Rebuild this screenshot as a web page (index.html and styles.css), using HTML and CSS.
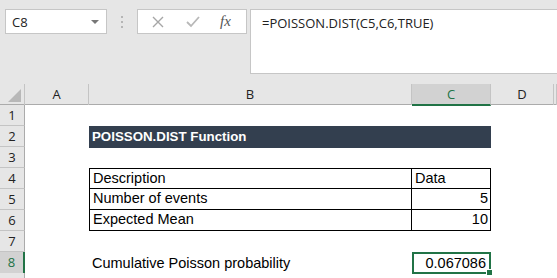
FILE: index.html
```html
<!DOCTYPE html>
<html lang="en">
<head>
  <meta charset="UTF-8">
  <title>POISSON.DIST Function</title>
  <link rel="stylesheet" href="styles.css">
</head>
<body>
  <div class="toolbar">
    <div class="name-box">
      <span>C8</span>
      <span class="drop"></span>
    </div>
    <div class="dots"><i></i><i></i><i></i></div>
    <div class="fx-box">
      <svg class="icon" width="12" height="12" viewBox="0 0 12 12">
        <path d="M1 1 L11 11 M11 1 L1 11" stroke="#a6a6a6" stroke-width="1.4" fill="none"/>
      </svg>
      <svg class="icon" width="14" height="12" viewBox="0 0 14 12">
        <path d="M1 6 L5 10 L13 1" stroke="#b8b8b8" stroke-width="1.8" fill="none"/>
      </svg>
      <span class="fx">fx</span>
    </div>
    <div class="formula">=POISSON.DIST(C5,C6,TRUE)</div>
  </div>

  <div class="sheet">
    <div class="row head">
      <div class="corner"><span class="tri"></span></div>
      <div class="col">A</div>
      <div class="col">B</div>
      <div class="col active">C</div>
      <div class="col">D</div>
      <div class="col"></div>
    </div>
    <div class="row">
      <div class="num">1</div><div></div><div></div><div></div><div></div>
    </div>
    <div class="row">
      <div class="num">2</div><div></div>
      <div class="title">POISSON.DIST Function</div>
      <div class="title"></div><div></div>
    </div>
    <div class="row">
      <div class="num">3</div><div></div><div></div><div></div><div></div>
    </div>
    <div class="row first">
      <div class="num">4</div><div></div>
      <div class="cell left">Description</div>
      <div class="cell">Data</div><div></div>
    </div>
    <div class="row">
      <div class="num">5</div><div></div>
      <div class="cell left">Number of events</div>
      <div class="cell right">5</div><div></div>
    </div>
    <div class="row">
      <div class="num">6</div><div></div>
      <div class="cell left">Expected Mean</div>
      <div class="cell right">10</div><div></div>
    </div>
    <div class="row">
      <div class="num">7</div><div></div><div></div><div></div><div></div>
    </div>
    <div class="row">
      <div class="num active">8</div><div></div>
      <div class="text">Cumulative Poisson probability</div>
      <div class="selected">0.067086<span class="handle"></span></div><div></div>
    </div>
    <div class="row last">
      <div class="num"></div><div></div><div></div><div></div><div></div>
    </div>
  </div>
</body>
</html>
```

FILE: styles.css
```css
body {
  margin: 0;
  width: 557px;
  height: 278px;
  overflow: hidden;
  background: #ffffff;
  font-family: "Open Sans", "Noto Sans", sans-serif;
}

.toolbar {
  height: 84px;
  background: #e6e6e6;
  display: flex;
  align-items: flex-start;
  padding: 9px 0 0 5px;
  box-sizing: border-box;
}

.name-box {
  width: 102px;
  height: 25px;
  box-sizing: border-box;
  background: #fff;
  border: 1px solid #c6c6c6;
  display: flex;
  align-items: center;
  justify-content: space-between;
  padding: 0 7px 0 6px;
  font-size: 13px;
  color: #222;
}

.drop {
  width: 0;
  height: 0;
  border-left: 4px solid transparent;
  border-right: 4px solid transparent;
  border-top: 4px solid #777;
}

.dots {
  width: 30px;
  height: 25px;
  display: flex;
  flex-direction: column;
  align-items: center;
  justify-content: center;
  gap: 3px;
}

.dots i {
  width: 2px;
  height: 2px;
  background: #b5b5b5;
}

.fx-box {
  width: 110px;
  height: 25px;
  box-sizing: border-box;
  background: #fff;
  border: 1px solid #c6c6c6;
  display: flex;
  align-items: center;
  padding: 0 0 0 14px;
  gap: 22px;
}

.fx {
  font-family: "Liberation Serif", serif;
  font-style: italic;
  font-size: 15px;
  color: #555;
  margin-left: -2px;
}

.formula {
  margin-left: 3px;
  flex: 1;
  height: 65px;
  box-sizing: border-box;
  background: #fff;
  border: 1px solid #c6c6c6;
  border-right: none;
  padding: 4px 0 0 11px;
  font-size: 13px;
  color: #222;
}

.row {
  display: grid;
  grid-template-columns: 25px 64px 323px 79px 63px 3px;
  height: 21px;
}

.row.head {
  height: 20px;
  background: #e6e6e6;
  border-bottom: 1px solid #ababab;
}

.row.last {
  height: 6px;
}

.corner {
  position: relative;
  border-right: 1px solid #c4c4c4;
}

.tri {
  position: absolute;
  right: 3px;
  bottom: 3px;
  width: 0;
  height: 0;
  border-left: 13px solid transparent;
  border-bottom: 13px solid #b8b8b8;
}

.col {
  border-right: 1px solid #c4c4c4;
  text-align: center;
  font-size: 13px;
  line-height: 20px;
  color: #222;
}

.col.active {
  background: #d2d2d2;
  color: #217346;
  border-bottom: 2px solid #217346;
  margin-bottom: -1px;
}

.num {
  background: #e6e6e6;
  border-right: 1px solid #ababab;
  border-bottom: 1px solid #c4c4c4;
  text-align: center;
  font-size: 13px;
  line-height: 20px;
  color: #222;
  box-sizing: border-box;
}

.num.active {
  background: #d2d2d2;
  color: #217346;
  border-right: 2px solid #217346;
}

.title {
  background: #333f4f;
  color: #fff;
  font-family: "Liberation Sans", Arial, sans-serif;
  font-weight: bold;
  font-size: 13.3px;
  line-height: 22px;
  padding-left: 3px;
  margin-bottom: -1px;
}

.cell,
.text,
.selected {
  font-family: "Liberation Sans", Arial, sans-serif;
  font-size: 14.5px;
  line-height: 20px;
  color: #000;
  box-sizing: border-box;
  padding: 0 2px 0 3px;
}

.cell {
  border-right: 1px solid #000;
  border-bottom: 1px solid #000;
}

.cell.left {
  border-left: 1px solid #000;
}

.first .cell {
  border-top: 1px solid #000;
}

.first .cell,
.first + .row .cell,
.first + .row + .row .cell {
  line-height: 19px;
}

.right,
.selected {
  text-align: right;
}

.text {
  line-height: 22px;
}

.selected {
  position: relative;
  border: 2px solid #217346;
  line-height: 18px;
  padding-right: 3px;
}

.handle {
  position: absolute;
  right: -4px;
  bottom: -4px;
  width: 5px;
  height: 5px;
  background: #217346;
  border: 1px solid #fff;
}
```
